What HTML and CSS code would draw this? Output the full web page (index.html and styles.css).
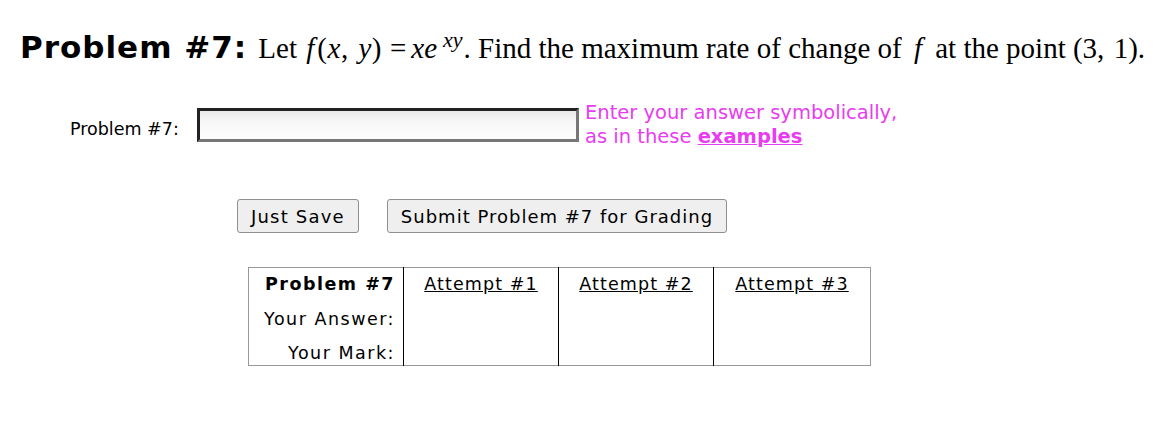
FILE: index.html
```html
<!DOCTYPE html>
<html>
<head>
<meta charset="utf-8">
<link rel="stylesheet" href="styles.css">
</head>
<body>
<div class="page">
  <h1 class="question"><span class="qnum">Problem #7:</span> <span class="math">Let <i class="fn">f</i><span class="args">(<i>x</i>,<span class="th"></span> <i>y</i>)</span><span class="rel">=</span><i>xe</i><sup><i>xy</i></sup>. Find the maximum rate of change of <i class="fn2">f</i> at the point (3,<span class="th"></span> 1).</span></h1>
  <div class="answer-row">
    <label class="ans-label">Problem #7:</label>
    <div class="ans-input"></div>
    <div class="hint">Enter your answer symbolically,<br>as in these <a class="ex-link" href="#">examples</a></div>
  </div>
  <div class="buttons">
    <button class="btn btn-save">Just Save</button>
    <button class="btn">Submit Problem #7 for Grading</button>
  </div>
  <table class="attempts">
    <tr class="r1">
      <th class="rowhead">Problem #7</th>
      <td class="att"><a href="#">Attempt #1</a></td>
      <td class="att"><a href="#">Attempt #2</a></td>
      <td class="att"><a href="#">Attempt #3</a></td>
    </tr>
    <tr class="r2">
      <td class="rowhead">Your Answer:</td>
      <td class="att"></td><td class="att"></td><td class="att"></td>
    </tr>
    <tr class="r3">
      <td class="rowhead">Your Mark:</td>
      <td class="att"></td><td class="att"></td><td class="att"></td>
    </tr>
  </table>
</div>
</body>
</html>
```
FILE: styles.css
```css
html, body { margin: 0; padding: 0; background: #fff; }
body { font-family: "DejaVu Sans", Verdana, sans-serif; color: #000; }
.page { padding: 26px 0 0 20px; }
.question { margin: 0; font-weight: normal; line-height: 42px; white-space: nowrap; }
.qnum { font-family: "DejaVu Sans", sans-serif; font-weight: bold; font-size: 31px; letter-spacing: 1px; }
.math { font-family: "Liberation Serif", "Times New Roman", serif; font-size: 29px; margin-left: 1px; }
.math i { font-style: italic; }
.fn { margin-left: 2px; margin-right: 3px; }
.fn2 { margin: 0 6px 0 5px; }
.th { display: inline-block; width: 2px; }
.args { letter-spacing: 0.5px; }
.rel { margin: 0 5px 0 8px; }
.math sup { font-size: 22px; vertical-align: 11px; line-height: 0; margin-left: 6px; margin-right: 1px; }
.answer-row { display: flex; align-items: center; margin-top: 32px; }
.ans-label { font-size: 17.5px; margin-left: 50px; width: 127px; padding-top: 8px; }
.ans-input { width: 376px; height: 28px; border-style: solid; border-width: 3px; border-color: #222 #777 #777 #222; background: linear-gradient(#e9e9e9, #f8f8f8 40%, #fdfdfd); }
.hint { color: #e83cf0; font-size: 19.5px; line-height: 24px; margin-left: 6px; }
.ex-link { color: #e83cf0; font-weight: bold; }
.buttons { display: flex; gap: 28px; margin: 50px 0 0 217px; }
.btn { font-family: "DejaVu Sans", sans-serif; font-size: 18px; letter-spacing: 1px; background: #efefef; border: 1px solid #8f8f8f; border-radius: 3px; height: 34px; padding: 0 13px; color: #000; }
.btn-save { letter-spacing: 1.2px; }
.attempts { border-collapse: collapse; border: 1px solid #999; margin: 34px 0 0 228px; font-size: 17.5px; letter-spacing: 1.1px; }
.attempts th, .attempts td { padding: 5px 0 0; vertical-align: top; line-height: 22px; box-sizing: border-box; }
.r1 > * { height: 35px; }
.r2 > * { height: 34px; }
.r3 > * { height: 29px; }
.rowhead { text-align: right; padding-right: 8px !important; width: 155px; border-right: 1px solid #000; font-weight: normal; letter-spacing: 1.5px; }
th.rowhead { font-weight: bold; letter-spacing: 1.5px; }
.att { width: 155px; border-right: 1px solid #000; text-align: center; }
.att:last-child { border-right: 1px solid #999; width: 157px; }
.att a { color: #000; }
```
